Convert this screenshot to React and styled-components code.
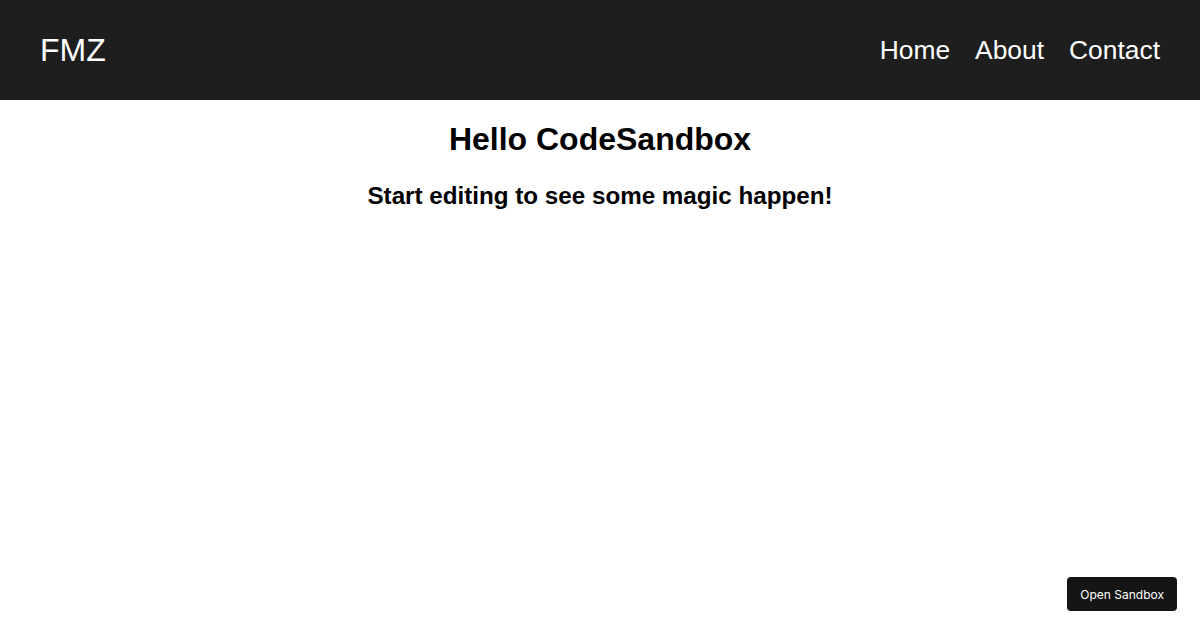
import React from "react";
import styled, { createGlobalStyle } from "styled-components";

const GlobalStyle = createGlobalStyle`
  body {
    margin: 0;
    font-family: "Liberation Sans", Arial, sans-serif;
    background: #fff;
    color: #000;
  }
`;

const Header = styled.header`
  display: flex;
  align-items: center;
  justify-content: space-between;
  height: 100px;
  padding: 0 40px;
  background-color: #1e1e1e;
  color: #fff;
`;

const Logo = styled.div`
  font-size: 32px;
`;

const Nav = styled.nav`
  display: flex;
  gap: 25px;
`;

const NavLink = styled.a`
  color: #fff;
  text-decoration: none;
  font-size: 26.4px;
  cursor: pointer;
`;

const Main = styled.main`
  text-align: center;
`;

const Title = styled.h1`
  font-size: 32px;
  margin: 21.44px 0;
`;

const Subtitle = styled.h2`
  font-size: 24.2px;
  margin: 24px 0 19.92px;
`;

const OpenButton = styled.button`
  position: fixed;
  right: 23px;
  bottom: 19px;
  height: 34px;
  padding: 0 13px;
  border: none;
  border-radius: 4px;
  background: #151515;
  color: #fff;
  font-family: Inter, "Liberation Sans", sans-serif;
  font-size: 12px;
  cursor: pointer;
`;

const links = ["Home", "About", "Contact"];

export default function App() {
  return (
    <>
      <GlobalStyle />
      <Header>
        <Logo>FMZ</Logo>
        <Nav>
          {links.map((l) => (
            <NavLink key={l}>{l}</NavLink>
          ))}
        </Nav>
      </Header>
      <Main>
        <Title>Hello CodeSandbox</Title>
        <Subtitle>Start editing to see some magic happen!</Subtitle>
      </Main>
      <OpenButton>Open Sandbox</OpenButton>
    </>
  );
}
